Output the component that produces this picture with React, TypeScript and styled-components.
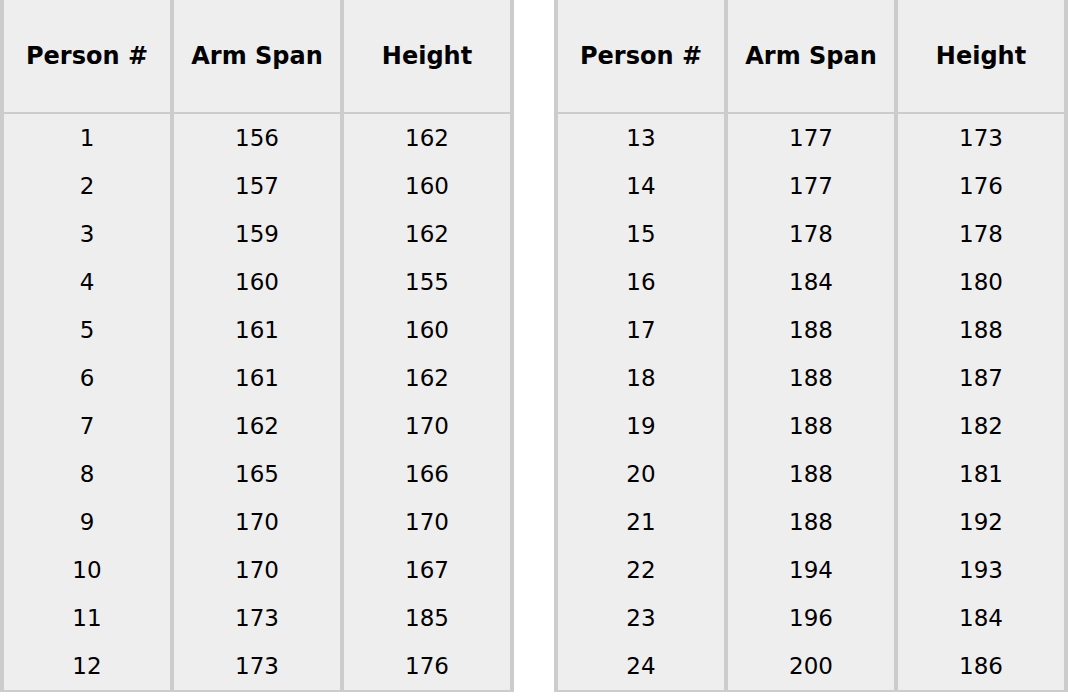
import React from 'react';
import styled, { createGlobalStyle } from 'styled-components';

const GlobalStyles = createGlobalStyle`
  body {
    margin: 0;
    background: #fff;
    font-family: 'DejaVu Sans', Verdana, sans-serif;
    color: #000;
  }
`;

const Page = styled.div`
  display: flex;
  gap: 40px;
  width: 1068px;
`;

const Table = styled.div`
  display: grid;
  grid-template-columns: repeat(3, 166px);
  column-gap: 4px;
  background: #cccccc;
  border-left: 4px solid #cccccc;
  border-right: 4px solid #cccccc;
  padding-bottom: 2px;
  align-self: flex-start;
`;

const HeadCell = styled.div`
  height: 112px;
  border-bottom: 2px solid #cccccc;
  background: #eeeeee;
  display: flex;
  align-items: center;
  justify-content: center;
  font-weight: bold;
  font-size: 24px;
`;

const Cell = styled.div`
  height: 48px;
  background: #eeeeee;
  display: flex;
  align-items: center;
  justify-content: center;
  font-size: 23px;
`;

type Row = [number, number, number];

const left: Row[] = [
  [1, 156, 162],
  [2, 157, 160],
  [3, 159, 162],
  [4, 160, 155],
  [5, 161, 160],
  [6, 161, 162],
  [7, 162, 170],
  [8, 165, 166],
  [9, 170, 170],
  [10, 170, 167],
  [11, 173, 185],
  [12, 173, 176],
];

const right: Row[] = [
  [13, 177, 173],
  [14, 177, 176],
  [15, 178, 178],
  [16, 184, 180],
  [17, 188, 188],
  [18, 188, 187],
  [19, 188, 182],
  [20, 188, 181],
  [21, 188, 192],
  [22, 194, 193],
  [23, 196, 184],
  [24, 200, 186],
];

const DataTable = ({ rows }: { rows: Row[] }) => (
  <Table>
    <HeadCell>Person #</HeadCell>
    <HeadCell>Arm Span</HeadCell>
    <HeadCell>Height</HeadCell>
    {rows.map((r) =>
      r.map((v, i) => <Cell key={`${r[0]}-${i}`}>{v}</Cell>)
    )}
  </Table>
);

const App = () => (
  <>
    <GlobalStyles />
    <Page>
      <DataTable rows={left} />
      <DataTable rows={right} />
    </Page>
  </>
);

export default App;
